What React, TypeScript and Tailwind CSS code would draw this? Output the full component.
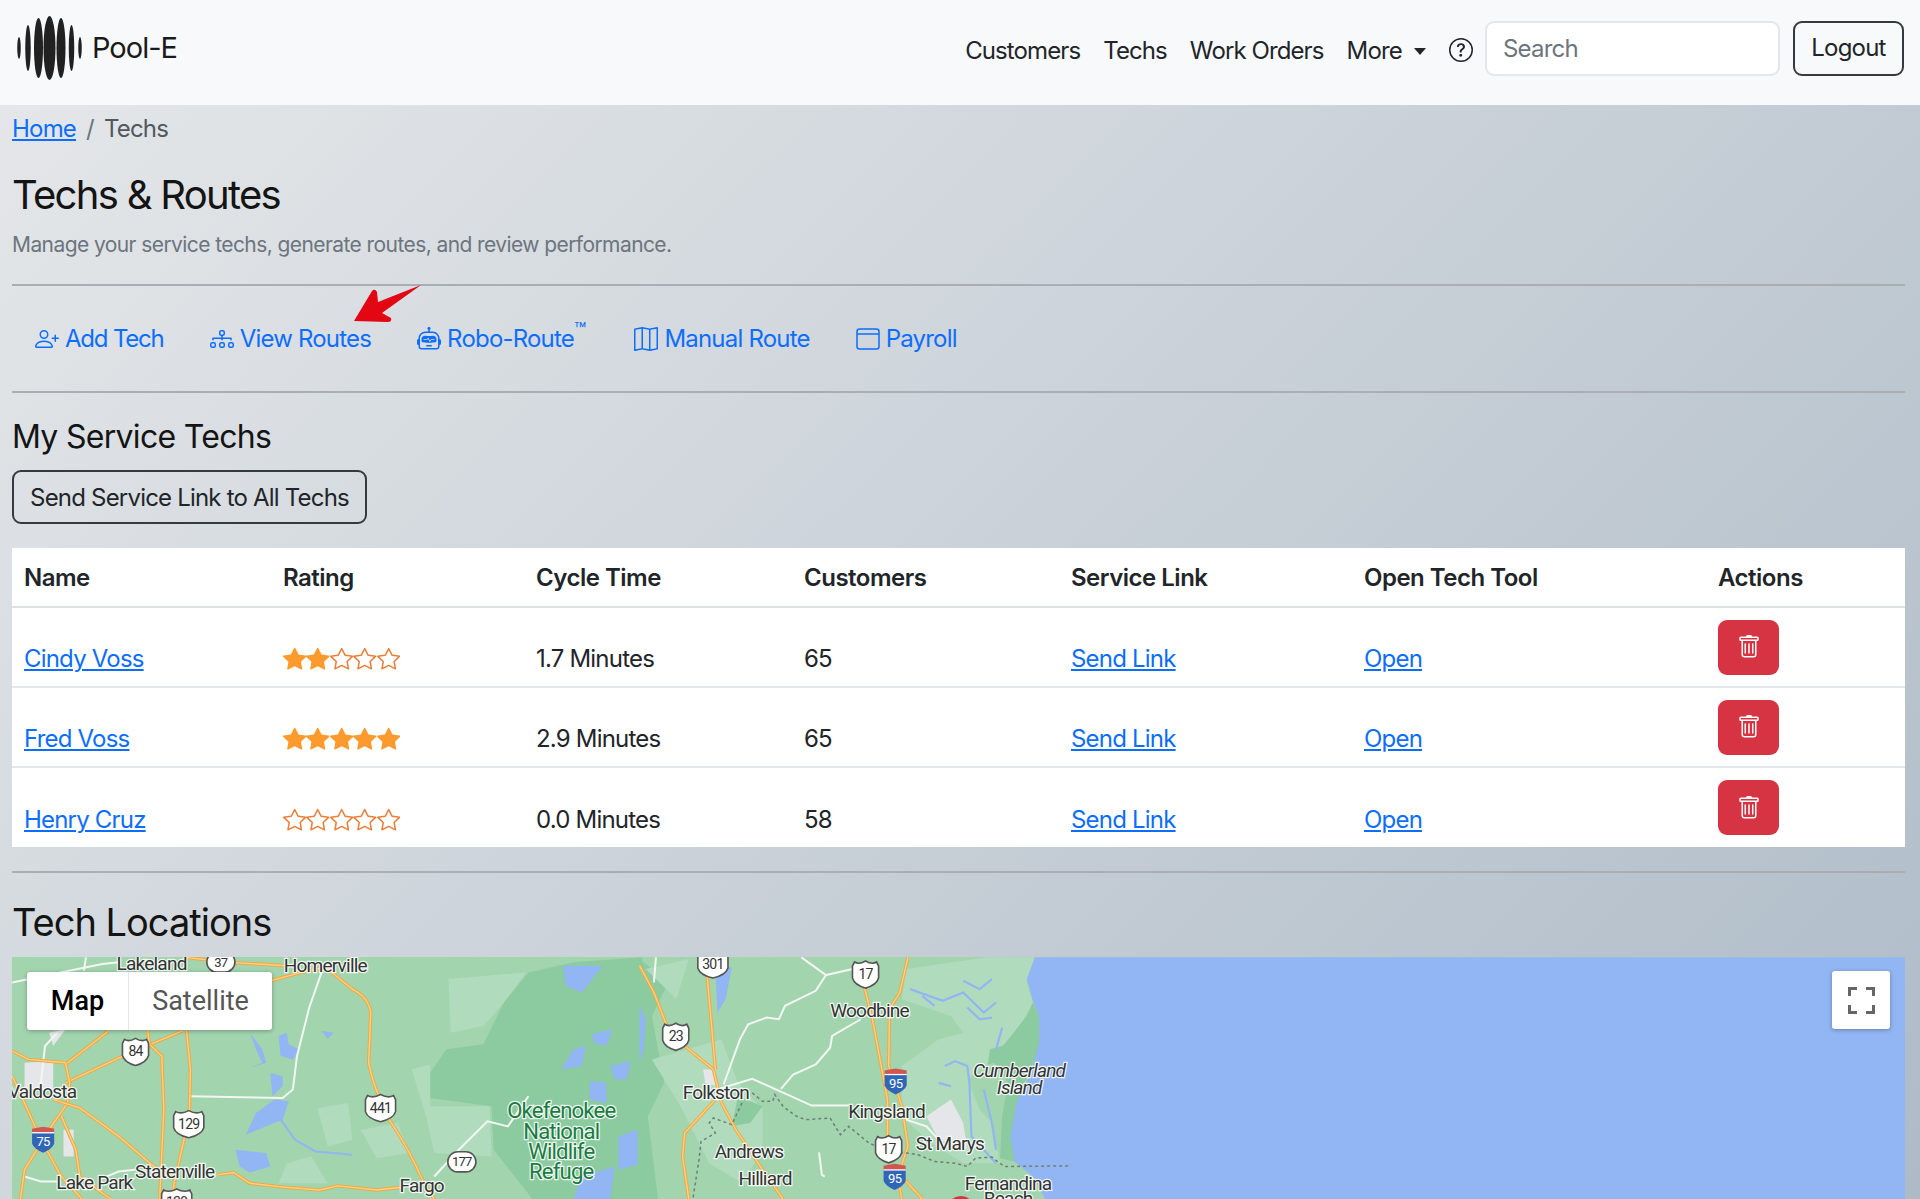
import { BsDiagram3, BsMap, BsPersonPlus, BsQuestionCircle, BsRobot, BsStar, BsStarFill, BsTrash } from 'react-icons/bs';

const techs = [
  { name: 'Cindy Voss', rating: 2, cycle: '1.7 Minutes', customers: 65 },
  { name: 'Fred Voss', rating: 5, cycle: '2.9 Minutes', customers: 65 },
  { name: 'Henry Cruz', rating: 0, cycle: '0.0 Minutes', customers: 58 },
];

// map data is in crop coordinates, scaled by the two <g> transforms below
const westOrange = [
  'M800,60 L860,120 Q900,145 905,190 L900,340 Q910,400 925,440 L950,510 Q1000,600 1035,700 L1060,747',
  'M450,25 L560,40 L700,50',
  'M660,95 L720,75 L790,55',
  'M455,240 L465,360 L462,500 L440,620 L425,700 L420,747',
  'M160,400 L300,320 L445,245',
  'M160,345 L265,245',
  'M30,305 L70,330 L160,340 L170,400 L165,460 L120,540 L60,660 L50,747',
  'M30,380 L60,460 L100,570 L150,680 L200,747',
  'M360,240 L365,285 L395,320 L400,480 L390,747',
  'M130,450 L195,475 L290,560 L385,660 L430,680',
  'M150,500 L185,600 L195,680 L270,747',
  'M530,675 L570,668 L610,700 L680,710 L780,720 L825,708 L920,720 L980,712',
];
const westWhite = [
  'M785,70 L755,175 L725,320 L715,420 L690,445 L465,440',
  'M100,400 L110,290 L140,250',
  'M210,25 L205,65',
  'M30,100 L130,75 L250,45 L290,40',
  'M60,680 L100,695 L140,695',
  'M240,690 L290,665 L330,660',
  'M1060,680 L1120,600 L1190,515 L1240,530 L1290,440',
];
const westLakes = [
  'M610,250 L640,300 L650,340 L610,355 L640,340 L625,300 Z',
  'M680,260 L700,250 L705,285 L730,300 L715,330 L685,320 Z',
  'M660,370 L690,380 L690,410 L665,440 Z',
  'M785,245 L815,250 L800,268 Z',
  'M670,450 L705,455 L690,510 L650,530 L600,555 L625,490 Z',
  'M575,600 L650,610 L660,650 L610,668 L585,650 Z',
  'M1375,50 L1470,50 L1440,100 L1420,130 L1380,110 Z',
  'M1400,300 L1430,290 L1420,350 L1370,360 Z',
  'M1440,395 L1480,400 L1480,460 L1440,450 Z',
  'M1490,350 L1540,335 L1530,390 L1500,390 Z',
  'M1445,255 L1495,240 L1480,290 L1450,280 Z',
  'M1510,560 L1555,540 L1568,640 L1510,660 Z',
  'M1420,680 L1500,650 L1490,747 L1400,747 Z',
];
const eastOrange = [
  'M0,50 L35,130 L65,225',
  'M110,290 L180,360 L200,460 L235,540 L300,660 L350,747',
  'M165,80 L185,360',
  'M185,450 L110,550 L105,620 L120,747',
  'M548,110 L570,220 L605,450 L605,560',
  'M655,25 L635,130 L610,180 L608,350 L640,470 L655,590 L630,680 L640,747',
  'M640,680 L690,747',
];
const eastWhite = [
  'M395,25 L455,78 L520,60',
  'M455,78 L430,125 L355,170 L340,210 L310,205 L265,225 L245,270 L205,405',
  'M540,210 L470,260 L465,295 L430,345 L375,375 L345,418',
  'M190,420 L275,388 L420,468 L510,468',
  'M650,510 L700,530 L745,590',
  'M40,25 L35,100',
  'M438,608 L445,675 L452,680',
];
const eastLight = [
  'M850,25 L965,25 L945,100 L960,160 L920,250 L860,330 L800,390 L830,480 L860,520 L880,640 L790,640 L700,570 L640,500 L640,350 L730,270 L790,250 L760,200 L640,150 L650,60 Z',
  'M30,330 L200,270 L240,400 L300,480 L300,600 L250,700 L170,640 L100,470 Z',
  'M120,30 L90,150 L15,60 Z',
];
const eastWater = [
  'M660,120 L740,155 L790,130 L840,190 L870,160',
  'M790,95 L830,120 L860,90',
  'M800,175 L830,210 L860,205',
  'M745,350 L770,335 L800,350 L805,400 L810,560 L870,640',
  'M730,400 L760,410',
  'M840,420 L860,520 L870,600',
  'M690,140 L720,170',
  'M885,235 L870,300',
];

function Road({ d, white }: { d: string; white?: boolean }) {
  if (white) {
    return <path d={d} fill="none" stroke="#f3f7f3" strokeWidth={2} vectorEffect="non-scaling-stroke" />;
  }
  return (
    <>
      <path d={d} fill="none" stroke="#ecaa45" strokeWidth={3.4} vectorEffect="non-scaling-stroke" />
      <path d={d} fill="none" stroke="#fdd083" strokeWidth={1.4} vectorEffect="non-scaling-stroke" />
    </>
  );
}

function Label({ x, y, children, size = 19, anchor = 'middle', color = '#333', italic }: { x: number; y: number; children: string; size?: number; anchor?: 'start' | 'middle' | 'end'; color?: string; italic?: boolean }) {
  return (
    <text
      x={x}
      y={y}
      textAnchor={anchor}
      dominantBaseline="central"
      fontFamily="Roboto, sans-serif"
      fontSize={size}
      fontStyle={italic ? 'italic' : 'normal'}
      fill={color}
      stroke="#ffffff"
      strokeOpacity={0.85}
      strokeWidth={2.5}
      paintOrder="stroke"
    >
      {children}
    </text>
  );
}

function UsShield({ x, y, n }: { x: number; y: number; n: string }) {
  const w = n.length > 2 ? 15 : 13;
  return (
    <g>
      <path
        d={`M${x - w + 2},${y - 12} Q${x - w / 2},${y - 9} ${x},${y - 13} Q${x + w / 2},${y - 9} ${x + w - 2},${y - 12} L${x + w},${y - 8} L${x + w},${y + 4} Q${x + w - 2},${y + 11} ${x},${y + 14} Q${x - w + 2},${y + 11} ${x - w},${y + 4} L${x - w},${y - 8} Z`}
        fill="#fff"
        stroke="#555"
        strokeWidth={1.6}
      />
      <text x={x} y={y} textAnchor="middle" dominantBaseline="central" fontFamily="Roboto, sans-serif" fontSize={14} fill="#333">
        {n}
      </text>
    </g>
  );
}

function OvalShield({ x, y, n }: { x: number; y: number; n: string }) {
  return (
    <g>
      <rect x={x - 14} y={y - 10} width={28} height={20} rx={10} fill="#fff" stroke="#555" strokeWidth={1.6} />
      <text x={x} y={y} textAnchor="middle" dominantBaseline="central" fontFamily="Roboto, sans-serif" fontSize={13} fill="#333">
        {n}
      </text>
    </g>
  );
}

function Interstate({ x, y, n }: { x: number; y: number; n: string }) {
  return (
    <g>
      <path d={`M${x - 11},${y - 7} L${x + 11},${y - 7} L${x + 11},${y + 4} Q${x + 9},${y + 9} ${x},${y + 13} Q${x - 9},${y + 9} ${x - 11},${y + 4} Z`} fill="#2f66b8" />
      <path d={`M${x - 11},${y - 7} L${x - 11},${y - 11} L${x - 6},${y - 12} L${x},${y - 13} L${x + 6},${y - 12} L${x + 11},${y - 11} L${x + 11},${y - 7} Z`} fill="#d0564f" />
      <rect x={x - 11} y={y - 7.6} width={22} height={1.3} fill="#fff" />
      <text x={x} y={y + 2} textAnchor="middle" dominantBaseline="central" fontFamily="Roboto, sans-serif" fontSize={13} fill="#fff">
        {n}
      </text>
    </g>
  );
}

function MapDrawing() {
  return (
    <svg viewBox="12 958 1893 241" preserveAspectRatio="xMinYMin slice" className="block h-full w-full">
      <rect x="0" y="950" width="1920" height="260" fill="#a2d4ae" />
      <g transform="translate(0 950) scale(0.408 0.3333)">
        <path d="M1050,370 L1090,300 L1180,285 L1230,160 L1290,70 L1400,40 L1568,25 L1568,747 L1300,747 L1205,600 L1200,470 L1050,445 Z" fill="#8ccb9f" />
        <path d="M1095,90 L1285,70 L1230,160 L1180,230 L1100,250 Z" fill="#b0dcbd" />
        <path d="M775,475 L850,460 L860,570 L800,590 Z" fill="#b0dcbd" />
        <path d="M880,540 L970,520 L1000,610 L920,625 Z" fill="#b0dcbd" />
        <path d="M1005,360 L1050,345 L1050,470 L1195,470 L1200,620 L1060,610 L1040,500 Z" fill="#b0dcbd" />
        <path d="M60,340 L130,335 L130,420 L60,420 Z" fill="#e4e6ea" />
        <path d="M155,540 L180,540 L180,620 L155,620 Z" fill="#e4e6ea" />
        <path d="M120,250 L160,240 L130,290 Z" fill="#e4e6ea" />
        <path d="M700,640 L760,620 L800,700 L680,700 Z" fill="#b0dcbd" />
        {westLakes.map((d) => (
          <path key={d} d={d} fill="#92b5f3" />
        ))}
        <path d="M680,500 L720,570 L770,605 L860,615" fill="none" stroke="#92b5f3" strokeWidth={2} vectorEffect="non-scaling-stroke" />
        {westWhite.map((d) => (
          <Road key={d} d={d} white />
        ))}
        {westOrange.map((d) => (
          <Road key={d} d={d} />
        ))}
      </g>
      <g transform="translate(637 950) scale(0.408 0.3333)">
        <path d="M-5,25 L70,100 L30,200 L60,400 L20,500 L45,747 L-5,747 Z" fill="#8ccb9f" />
        {eastLight.map((d) => (
          <path key={d} d={d} fill="#b0dcbd" />
        ))}
        <path d="M240,440 L300,470 L270,520 L225,530 Z" fill="#8ccb9f" />
        <path d="M0,170 L15,210 L10,300 L0,340 Z" fill="#92b5f3" />
        <path d="M185,60 L225,55 L210,150 L190,190 Z" fill="#92b5f3" />
        <path d="M700,500 L760,450 L790,520 L800,600 L730,570 Z" fill="#e4e6ea" />
        <path d="M155,360 L185,360 L190,410 L160,400 Z" fill="#e4e6ea" />
        <path d="M960,160 L975,200 L975,300 L940,400 L910,560 L915,635 L880,625 L885,500 L900,400 L860,330 L900,270 L945,200 Z" fill="#8ccb9f" />
        <path d="M855,300 L900,285 L920,320 L850,345 Z" fill="#8ccb9f" />
        {eastWater.map((d) => (
          <path key={d} d={d} fill="none" stroke="#92b5f3" strokeWidth={2.2} vectorEffect="non-scaling-stroke" />
        ))}
        <path
          d="M965,25 L945,90 L960,155 L975,200 L975,280 L955,370 L920,460 L905,560 L915,635 L960,680 L990,747 L3300,747 L3300,25 Z"
          fill="#92b5f3"
        />
        {eastWhite.map((d) => (
          <Road key={d} d={d} white />
        ))}
        {eastOrange.map((d) => (
          <Road key={d} d={d} />
        ))}
        <path
          d="M275,430 L300,455 L325,455 L330,435 L350,470 L380,498 L405,510 L465,505 L490,555 L510,530 L560,580 L600,600 L680,615 L720,635 L770,640 L800,650 L820,625 L860,622 L890,650 L1050,648"
          fill="none"
          stroke="#6f7f77"
          strokeWidth={1.5}
          strokeDasharray="3 3"
          vectorEffect="non-scaling-stroke"
        />
        <path
          d="M250,460 L225,525 L180,505 L170,520 L185,550 L150,575 L145,630 L130,747"
          fill="none"
          stroke="#6f7f77"
          strokeWidth={1.5}
          strokeDasharray="3 3"
          vectorEffect="non-scaling-stroke"
        />
      </g>

      <Label x={151} y={964}>Lakeland</Label>
      <Label x={324} y={966}>Homerville</Label>
      <Label x={76} y={1092} anchor="end">Valdosta</Label>
      <Label x={174} y={1172}>Statenville</Label>
      <Label x={94} y={1183}>Lake Park</Label>
      <Label x={420} y={1186}>Fargo</Label>
      <Label x={559} y={1111} size={22} color="#1b7b42">Okefenokee</Label>
      <Label x={559} y={1132} size={22} color="#1b7b42">National</Label>
      <Label x={559} y={1152} size={22} color="#1b7b42">Wildlife</Label>
      <Label x={559} y={1172} size={22} color="#1b7b42">Refuge</Label>
      <Label x={866} y={1011}>Woodbine</Label>
      <Label x={713} y={1093}>Folkston</Label>
      <Label x={883} y={1112}>Kingsland</Label>
      <Label x={946} y={1144}>St Marys</Label>
      <Label x={746} y={1152}>Andrews</Label>
      <Label x={762} y={1179}>Hilliard</Label>
      <Label x={1004} y={1184}>Fernandina</Label>
      <Label x={1004} y={1199}>Beach</Label>
      <Label x={1015} y={1071} italic>Cumberland</Label>
      <Label x={1015} y={1088} italic>Island</Label>

      <OvalShield x={220} y={963} n="37" />
      <UsShield x={135} y={1052} n="84" />
      <UsShield x={188} y={1124} n="129" />
      <UsShield x={379} y={1108} n="441" />
      <OvalShield x={460} y={1162} n="177" />
      <UsShield x={176} y={1202} n="129" />
      <Interstate x={43} y={1140} n="75" />
      <UsShield x={710} y={965} n="301" />
      <UsShield x={862} y={975} n="17" />
      <UsShield x={673} y={1037} n="23" />
      <Interstate x={892} y={1082} n="95" />
      <UsShield x={885} y={1149} n="17" />
      <Interstate x={891} y={1177} n="95" />
      <circle cx={957} cy={1210} r={14} fill="#d8353f" />
    </svg>
  );
}

function Stars({ rating }: { rating: number }) {
  return (
    <span className="flex text-[23.4px]">
      {[1, 2, 3, 4, 5].map((i) =>
        i <= rating ? (
          <BsStarFill key={i} className="text-[#fd9a2d]" />
        ) : (
          <BsStar key={i} className="text-[#e9803a]" />
        ),
      )}
    </span>
  );
}

function Logo() {
  const bars = [
    [18, 22, 3.5],
    [27, 46, 5.5],
    [37.5, 60, 9],
    [48.5, 64, 12],
    [60, 60, 9],
    [70.5, 46, 5.5],
    [79, 22, 3.5],
  ];
  return (
    <svg width="66" height="66" viewBox="15 16 66 66" className="shrink-0">
      {bars.map(([x, h, w]) => (
        <ellipse key={x} cx={x} cy={49} rx={w / 2} ry={h / 2} fill="#212121" />
      ))}
    </svg>
  );
}

const linkCls = 'flex items-center gap-1.5 px-[23px] text-[#0d6efd]';

export default function App() {
  return (
    <div className="relative flex h-[1199px] flex-col overflow-hidden bg-[linear-gradient(135deg,#e6e8ea,#aebbc7)] font-['Inter',sans-serif] text-[24px] leading-[36px] tracking-[-0.8px] text-[#212529]">
      <nav className="flex h-[105px] shrink-0 items-center justify-between bg-[#f8f9fa] pb-[9px] pl-4 pr-4">
        <div className="flex items-center gap-[10px]">
          <Logo />
          <span className="text-[29px] tracking-[-1px] text-[#1a1a1a]">Pool-E</span>
        </div>
        <div className="flex items-center">
          <a className="mr-[23px] mt-[5px] tracking-[-0.9px]">Customers</a>
          <a className="mr-[23px] mt-[5px] tracking-[-0.9px]">Techs</a>
          <a className="mr-[23px] mt-[5px] tracking-[-0.9px]">Work Orders</a>
          <a className="mt-[5px] flex items-center">
            More
            <span className="ml-3 mt-0.5 border-x-[6px] border-t-[7px] border-x-transparent border-t-[#212529]" />
          </a>
          <BsQuestionCircle className="ml-[23px] mt-[3px] text-[24px]" />
          <input
            placeholder="Search"
            className="ml-3 h-[55px] w-[295px] rounded-[9px] border-2 border-[#e3e6ea] bg-white px-4 text-[24px] outline-none placeholder:text-[#6c757d]"
          />
          <button className="ml-[13px] h-[55px] w-[111px] rounded-[9px] border-2 border-[#343a40]">Logout</button>
        </div>
      </nav>

      <main className="flex min-h-0 flex-1 flex-col pl-3 pr-[15px]">
        <div className="mt-1.5 flex">
          <a className="text-[#0d6efd] underline">Home</a>
          <span className="mx-[10px] text-[#6c757d]">/</span>
          <span className="text-[#51585e]">Techs</span>
        </div>
        <h1 className="mt-6 text-[40px] leading-[48px] tracking-[-1.7px] text-[#141414]">Techs &amp; Routes</h1>
        <p className="mt-2 text-[21px] tracking-[-0.58px] text-[#6c757d]">Manage your service techs, generate routes, and review performance.</p>
        <hr className="mt-[21px] border-t-2 border-[#a8aeb3]" />

        <div className="relative flex pb-[34px] pt-[35px]">
          <a className={`${linkCls} tracking-[-1.2px]`}>
            <BsPersonPlus /> Add Tech
          </a>
          <a className={linkCls}>
            <BsDiagram3 /> View Routes
          </a>
          <a className={linkCls}>
            <BsRobot />
            <span>
              Robo-Route<sup className="pr-[3px] text-[20px]">™</sup>
            </span>
          </a>
          <a className={linkCls}>
            <BsMap /> Manual Route
          </a>
          <a className={linkCls}>
            <svg width="24" height="24" viewBox="0 0 24 24" fill="none" stroke="currentColor" strokeWidth="1.5">
              <rect x="1" y="2" width="22" height="20" rx="2.5" />
              <path d="M1 7h22" />
            </svg>
            Payroll
          </a>
          {/* annotation arrow on top of the links */}
          <svg width="80" height="50" viewBox="0 0 80 50" className="absolute left-[328px] top-[-3px] overflow-visible">
            <path d="M81 2 L42 30 L51 35 Q52 39 48 39 L14 38 L32 8 Q35 5 37 9 L38 19 Z" fill="#e30613" />
          </svg>
        </div>
        <hr className="border-t-2 border-[#a8aeb3]" />

        <h2 className="mt-6 text-[32px] leading-[40px] tracking-[-0.7px] text-[#141414]">My Service Techs</h2>
        <div className="mt-[13px]">
          <button className="h-[54px] w-[355px] rounded-[9px] border-2 border-[#343a40] pt-0.5">Send Service Link to All Techs</button>
        </div>

        <table className="mt-6 w-full table-fixed border-collapse bg-white">
          <thead>
            <tr className="h-[59px] border-b-2 border-[#dee2e6] text-left tracking-[-0.5px]">
              <th className="w-[259px] pl-3 pt-0.5 font-semibold">Name</th>
              <th className="w-[253px] pl-3 pt-0.5 font-semibold">Rating</th>
              <th className="w-[268px] pl-3 pt-0.5 font-semibold">Cycle Time</th>
              <th className="w-[267px] pl-3 pt-0.5 font-semibold">Customers</th>
              <th className="w-[293px] pl-3 pt-0.5 font-semibold">Service Link</th>
              <th className="w-[354px] pl-3 pt-0.5 font-semibold">Open Tech Tool</th>
              <th className="pl-3 pt-0.5 font-semibold">Actions</th>
            </tr>
          </thead>
          <tbody>
            {techs.map((t, i) => (
              <tr key={t.name} className={`h-[80px] ${i < 2 ? 'border-b-2 border-[#e4e7ea]' : ''}`}>
                <td className="pb-[9px] pl-3 align-bottom">
                  <a className="text-[#0d6efd] underline">{t.name}</a>
                </td>
                <td className="pb-4 pl-3 align-bottom">
                  <Stars rating={t.rating} />
                </td>
                <td className="pb-[9px] pl-3 align-bottom">{t.cycle}</td>
                <td className="pb-[9px] pl-3 align-bottom">{t.customers}</td>
                <td className="pb-[9px] pl-3 align-bottom">
                  <a className="text-[#0d6efd] underline">Send Link</a>
                </td>
                <td className="pb-[9px] pl-3 align-bottom">
                  <a className="text-[#0d6efd] underline">Open</a>
                </td>
                <td className="pl-3 align-middle">
                  <button className="flex h-[55px] w-[61px] items-center justify-center rounded-[9px] bg-[#d63343] text-white">
                    <BsTrash className="text-[24px]" />
                  </button>
                </td>
              </tr>
            ))}
          </tbody>
        </table>

        <hr className="mt-6 border-t-2 border-[#a8aeb3]" />
        <h2 className="mt-[26px] text-[38px] leading-[46px] tracking-[-1px] text-[#141414]">Tech Locations</h2>

        <div className="relative mt-3 min-h-0 flex-1 overflow-hidden">
          <MapDrawing />
          <div className="absolute left-[15px] top-[15px] flex h-[58px] items-center rounded-[3px] bg-white font-['Roboto',sans-serif] text-[27px] tracking-normal shadow-[0_1px_4px_rgba(0,0,0,0.3)]">
            <span className="flex h-full w-[102px] items-center justify-center border-r border-[#e6e6e6] font-medium text-black">Map</span>
            <span className="flex h-full w-[143px] items-center justify-center text-[#565656]">Satellite</span>
          </div>
          <button className="absolute right-[15px] top-[14px] flex h-[58px] w-[58px] items-center justify-center rounded-[3px] bg-white shadow-[0_1px_4px_rgba(0,0,0,0.3)]">
            <svg width="27" height="27" viewBox="0 0 27 27" fill="none" stroke="#666" strokeWidth="3">
              <path d="M1.5 9V1.5H9M18 1.5h7.5V9M25.5 18v7.5H18M9 25.5H1.5V18" />
            </svg>
          </button>
        </div>
      </main>
    </div>
  );
}
